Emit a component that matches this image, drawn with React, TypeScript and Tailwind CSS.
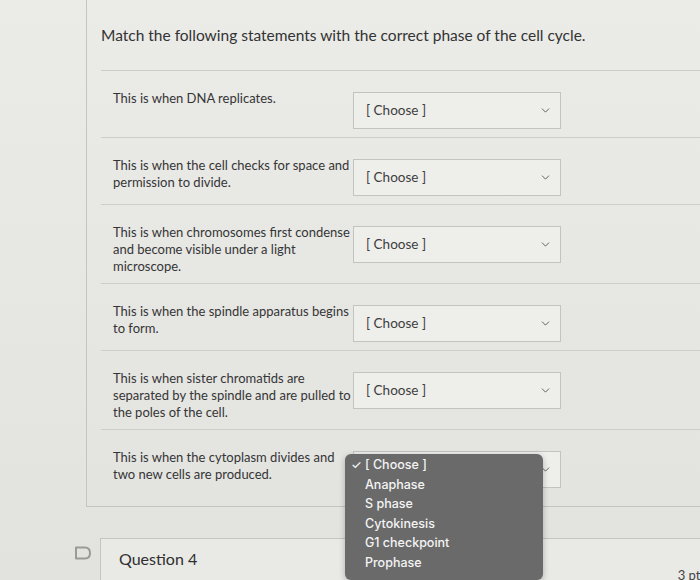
import { ChevronDown } from 'lucide-react'

const rows = [
  'This is when DNA replicates.',
  'This is when the cell checks for space and permission to divide.',
  'This is when chromosomes first condense and become visible under a light microscope.',
  'This is when the spindle apparatus begins to form.',
  'This is when sister chromatids are separated by the spindle and are pulled to the poles of the cell.',
  'This is when the cytoplasm divides and two new cells are produced.',
]

const options = ['[ Choose ]', 'Anaphase', 'S phase', 'Cytokinesis', 'G1 checkpoint', 'Prophase']

function ChooseSelect({ open }: { open?: boolean }) {
  return (
    <div className="relative mt-[2px] shrink-0">
      <div className="w-[208px] h-[37px] border border-[#c3c3c0] bg-[#eeeeeb] flex items-center justify-between pl-[12px] pr-[8px] text-[13.5px] text-[#3d3d3d]">
        <span className={open ? 'invisible' : ''}>[ Choose ]</span>
        <ChevronDown size={13} strokeWidth={1.8} className="text-[#5f5f5f]" />
      </div>
      {open && (
        <div className="absolute left-[-8px] top-[3px] w-[198px] rounded-[6px] bg-[#6a6a6a] pt-[1px] pb-[8px] shadow-[0_2px_6px_rgba(0,0,0,0.25)] z-10 font-['Inter',sans-serif] text-[12.5px] leading-[19.5px] font-medium text-[#f4f4f4]">
          {options.map((o, i) => (
            <div key={o} className="flex items-center h-[19.5px] overflow-hidden">
              <span className="w-[20px] pl-[6px] text-[12px] leading-[19.5px]">{i === 0 ? '✓' : ''}</span>
              <span>{o}</span>
            </div>
          ))}
        </div>
      )}
    </div>
  )
}

export default function App() {
  return (
    <div className="w-[700px] h-[580px] overflow-hidden relative bg-linear-to-b from-[#ebebe8] to-[#e2e2df] font-['Lato','Liberation_Sans',sans-serif] text-[#333333]">
      <div className="ml-[86px] border-l border-b border-[#c4c4c1] pl-[14px] pb-[10px]">
        <h2 className="pt-[24px] mb-[24px] text-[15.5px] leading-[22px]">
          Match the following statements with the correct phase of the cell cycle.
        </h2>
        {rows.map((text, i) => (
          <div
            key={i}
            className="border-t border-[#cdcdca] flex items-start gap-[2px] pl-[12px] pt-[19px] pb-[8px]"
          >
            <p className="w-[238px] text-[13px] leading-[17px] text-[#353535]">{text}</p>
            <ChooseSelect open={i === rows.length - 1} />
          </div>
        ))}
      </div>

      <div className="mt-[31px] flex items-start">
        <svg width="18" height="14" viewBox="0 0 18 14" className="ml-[74px] mt-[8px] mr-[8px]">
          <path
            d="M2 1.5 H11 C14.5 1.5 16 4 16 7 C16 10 14.5 12.5 11 12.5 H2 Z"
            fill="none"
            stroke="#9a9a98"
            strokeWidth="2"
            strokeLinejoin="round"
          />
        </svg>
        <div className="flex-1 border-l border-t border-[#c4c4c1] bg-[#e9e9e6] h-[50px] pl-[18px] pt-[9px] flex justify-between">
          <span className="text-[16px] leading-[22px] text-[#2f2f2f]">Question 4</span>
          <span className="text-[13px] text-[#444] mt-[18px] mr-[-6px]">3 pts</span>
        </div>
      </div>
    </div>
  )
}
